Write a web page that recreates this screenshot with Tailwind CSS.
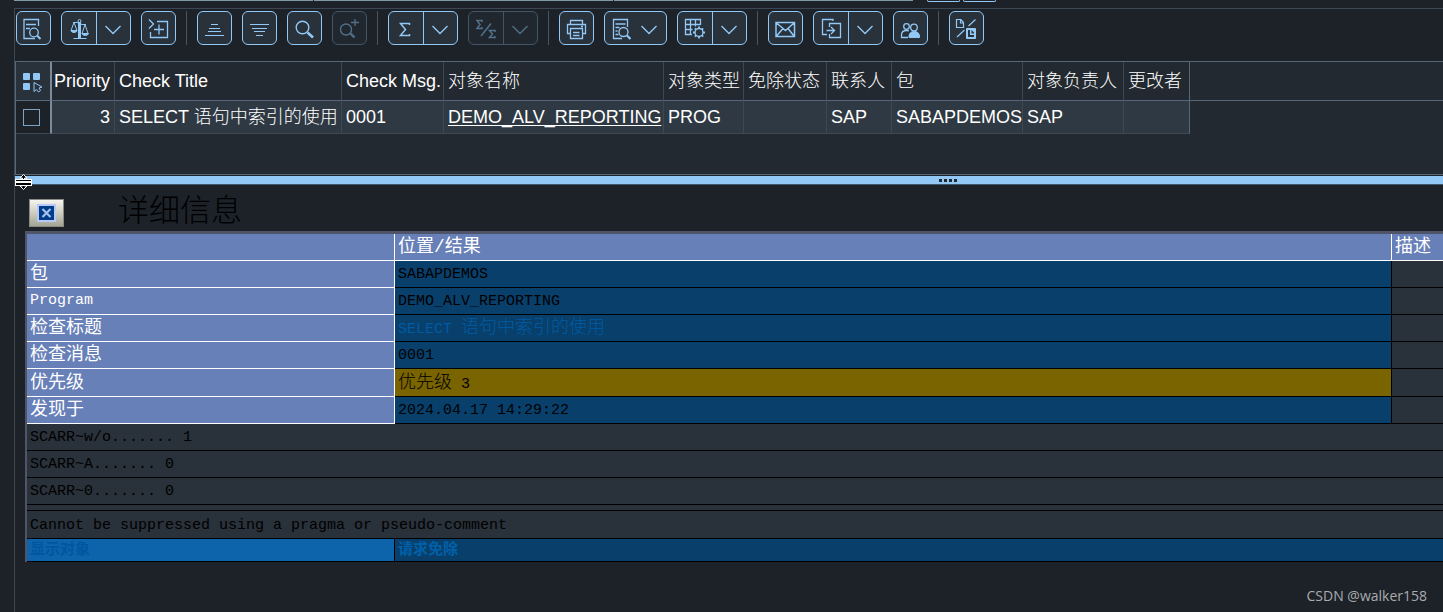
<!DOCTYPE html>
<html lang="zh-CN">
<head>
  <meta charset="UTF-8" />
  <title>Code Inspector</title>
  <script src="https://cdn.jsdelivr.net/npm/@tailwindcss/browser@4"></script>
</head>
<body class="bg-[#1d2229] min-h-screen flex flex-col pl-[14px] overflow-x-hidden text-white font-['Liberation_Sans','Noto_Sans_CJK_SC',sans-serif]">

  <!-- Shared icons -->
  <svg class="hidden">
    <symbol id="chevron" viewBox="0 0 25 24"><path d="M4.5 10 12 17.5 19.5 10" stroke-width="1.4" /></symbol>
  </svg>

  <!-- Bottom edge of the bar above -->
  <div class="h-2 flex items-start shrink-0">
    <div class="h-px w-[299px] mr-px bg-[#8297a8]"></div>
    <div class="h-px w-[299px] mr-px bg-[#8297a8]"></div>
    <div class="h-px w-[299px] mr-[14px] bg-[#8297a8]"></div>
    <div class="h-0.5 w-[33px] mr-[3px] rounded-b border border-t-0 border-[#91c8f6]"></div>
    <div class="h-0.5 w-[33px] rounded-b border border-t-0 border-[#91c8f6]"></div>
  </div>

  <main class="grow flex flex-col border-l border-[#3b4854]">

    <!-- Toolbar -->
    <div role="toolbar" class="flex items-center gap-[10px] border-t border-[#3b4854] pt-0.5 pb-4 pl-px text-[#91c8f6] [&_svg]:w-[25px] [&_svg]:h-6 [&_svg]:shrink-0 [&_svg]:fill-none [&_svg]:stroke-current">
      <button aria-label="Details" class="w-[35px] h-[34px] shrink-0 flex items-center justify-center rounded-md border border-[#91c8f6] bg-[#29313a]">
        <svg viewBox="0 0 25 24"><path d="M17.5 10V3.5H3v19h11M5 8.5h10M5 12.5h4" stroke-width="1.3" /><circle cx="13" cy="16.5" r="4.3" stroke-width="1.3" /><path d="m16 19.5 3.5 3.5" stroke-width="2" /></svg>
      </button>

      <div class="flex shrink-0 h-[34px] w-[70px] rounded-md border border-[#91c8f6] bg-[#29313a] divide-x divide-[#91c8f6]">
        <button aria-label="Compare" class="w-[35px] flex items-center justify-center">
          <svg viewBox="0 0 25 24"><path d="M12.5 6v16" stroke-width="3" /><path d="M6.5 22.5h13M6 6.5h4l2.5 1 2.5 1h4M7 6.5l-3 8M7 6.5l3 8M18 8.5l-3 9M18 8.5l3 9" /><circle cx="12.5" cy="5" r="1.5" /><path class="fill-current" d="M4 14.5h6q-.5 2-3 2t-3-2zM15 17.5h6.500q-.5 2-3.200 2t-3.300-2z" /></svg>
        </button>
        <button aria-label="Compare menu" class="flex-1 flex items-center justify-center"><svg><use href="#chevron" /></svg></button>
      </div>

      <button aria-label="Insert" class="w-[35px] h-[34px] shrink-0 flex items-center justify-center rounded-md border border-[#91c8f6] bg-[#29313a]">
        <svg viewBox="0 0 25 24"><path d="M3 3.5 7.5 8 3 12.5M11 5.5h10.5v16h-17V16M8 13.5h10M13 8.5v10" stroke-width="1.3" /></svg>
      </button>
      <div class="w-px h-[34px] bg-[#475462]"></div>

      <button aria-label="Sort ascending" class="w-[35px] h-[34px] shrink-0 flex items-center justify-center rounded-md border border-[#91c8f6] bg-[#29313a]">
        <svg viewBox="0 0 25 24"><path d="M9 8.5h7M7 12.5h11M6 15.5h13M3 19.5h19" /></svg>
      </button>
      <button aria-label="Sort descending" class="w-[35px] h-[34px] shrink-0 flex items-center justify-center rounded-md border border-[#91c8f6] bg-[#29313a]">
        <svg viewBox="0 0 25 24"><path d="M3 8.5h19M5 12.5h15M7 15.5h11M9 19.5h7" /></svg>
      </button>
      <button aria-label="Find" class="w-[35px] h-[34px] shrink-0 flex items-center justify-center rounded-md border border-[#91c8f6] bg-[#29313a]">
        <svg viewBox="0 0 25 24"><circle cx="10.5" cy="11.5" r="6.3" stroke-width="1.4" /><path d="m15.5 16.5 5.5 5" stroke-width="2.6" /></svg>
      </button>
      <button disabled aria-label="Find next" class="w-[35px] h-[34px] shrink-0 flex items-center justify-center rounded-md border border-[#425668] bg-[#20272e] text-[#527089]">
        <svg viewBox="0 0 25 24"><circle cx="9" cy="13.5" r="5.5" stroke-width="1.4" /><path d="m13.5 17.5 4 4" stroke-width="2.4" /><path d="M14 6.5h8M18 3v7" stroke-width="1.3" /></svg>
      </button>
      <div class="w-px h-[34px] bg-[#475462]"></div>

      <div class="flex shrink-0 h-[34px] w-[70px] rounded-md border border-[#91c8f6] bg-[#29313a] divide-x divide-[#91c8f6]">
        <button aria-label="Total" class="w-[35px] flex items-center justify-center">
          <svg viewBox="0 0 25 24"><path d="M15.5 9V7.500h-9l5 6-5 6h9V18" stroke-width="1.5" /></svg>
        </button>
        <button aria-label="Total menu" class="flex-1 flex items-center justify-center"><svg><use href="#chevron" /></svg></button>
      </div>
      <div class="flex shrink-0 h-[34px] w-[70px] rounded-md border border-[#425668] bg-[#20272e] divide-x divide-[#425668] text-[#527089]">
        <button disabled aria-label="Subtotal" class="w-[35px] flex items-center justify-center">
          <svg viewBox="0 0 25 24"><path d="M8 6V4.500H3l3 4-3 4h5V11M7 20 17 7.500M21 16v-1.500h-5.500l3 3.500-3 3.500H21V20" stroke-width="1.5" /></svg>
        </button>
        <button disabled aria-label="Subtotal menu" class="flex-1 flex items-center justify-center"><svg><use href="#chevron" /></svg></button>
      </div>
      <div class="w-px h-[34px] bg-[#475462]"></div>

      <button aria-label="Print" class="w-[35px] h-[34px] shrink-0 flex items-center justify-center rounded-md border border-[#91c8f6] bg-[#29313a]">
        <svg viewBox="0 0 25 24"><path d="M6.5 8V4.500h12V8M6.500 17.500h-3v-9h18v9h-3M6.500 12.500h12v10h-12zM9 16.500h6.500M9 19.500h6.500M17 10.500h2" stroke-width="1.3" /></svg>
      </button>
      <button aria-label="Views" class="w-[63px] h-[34px] shrink-0 flex items-center gap-[3px] pl-1 rounded-md border border-[#91c8f6] bg-[#29313a]">
        <svg viewBox="0 0 25 24"><path d="M18.5 11V3.500h-14v19H13M6.500 8h10M6.500 11.500h4M6.500 15h2M6.500 18.500h3" stroke-width="1.3" /><circle cx="14.5" cy="16" r="4.5" stroke-width="1.3" /><path d="m18 19.5 3.5 3.5" stroke-width="2.2" /></svg>
        <svg><use href="#chevron" /></svg>
      </button>
      <div class="flex shrink-0 h-[34px] w-[70px] rounded-md border border-[#91c8f6] bg-[#29313a] divide-x divide-[#91c8f6]">
        <button aria-label="Layout" class="w-[35px] flex items-center justify-center">
          <svg viewBox="0 0 25 24"><path d="M17.5 9V3.500h-15v15H9M2.500 8.500h15M2.500 13.500h7M7.500 3.500v15M12.500 3.500v7" stroke-width="1.3" /><circle cx="16" cy="16.5" r="4" stroke-width="1.4" /><path d="M16 10.5v2M16 20.5v2M10 16.5h2M20 16.5h2M11.800 12.300l1.400 1.400M18.800 19.300l1.400 1.400M20.200 12.300l-1.400 1.400M13.200 19.300l-1.400 1.400" stroke-width="1.8" /></svg>
        </button>
        <button aria-label="Layout menu" class="flex-1 flex items-center justify-center"><svg><use href="#chevron" /></svg></button>
      </div>
      <div class="w-px h-[34px] bg-[#475462]"></div>

      <button aria-label="Mail" class="w-[35px] h-[34px] shrink-0 flex items-center justify-center rounded-md border border-[#91c8f6] bg-[#29313a]">
        <svg viewBox="0 0 25 24"><path d="M3 6.500h18.500v14H3zM3.500 7l9 7.500 8.500-7.500M3.500 20l6.500-7.500M21 20l-6-7.500" stroke-width="1.5" /></svg>
      </button>
      <div class="flex shrink-0 h-[34px] w-[70px] rounded-md border border-[#91c8f6] bg-[#29313a] divide-x divide-[#91c8f6]">
        <button aria-label="Export" class="w-[35px] flex items-center justify-center">
          <svg viewBox="0 0 25 24"><path d="M14 5V3.500H3.500v15H8M10.500 11V7.500h11v14h-11V18M7.500 14.500h8M12 11l3.500 3.500L12 18" stroke-width="1.3" /></svg>
        </button>
        <button aria-label="Export menu" class="flex-1 flex items-center justify-center"><svg><use href="#chevron" /></svg></button>
      </div>
      <button aria-label="Responsible" class="w-[35px] h-[34px] shrink-0 flex items-center justify-center rounded-md border border-[#91c8f6] bg-[#29313a]">
        <svg viewBox="0 0 25 24"><circle cx="8.5" cy="10.5" r="2.8" stroke-width="1.3" /><path d="M10 21.5H3.500V19q0-4.500 5-4.500 1.500 0 2.500.5" stroke-width="1.3" /><circle cx="16" cy="11.5" r="3.3" stroke-width="1.3" /><path class="fill-current" d="M11 21.5V20q.5-4.500 5.200-4.500t5.300 4.500v1.500z" /></svg>
      </button>
      <div class="w-px h-[34px] bg-[#475462]"></div>

      <button aria-label="Exemption" class="w-[35px] h-[34px] shrink-0 flex items-center justify-center rounded-md border border-[#91c8f6] bg-[#29313a]">
        <svg viewBox="0 0 25 24"><path d="M2.500 3.500H7l2.500 3v5h-7zM6.500 3.500V7h3M21.500 3.500l-7 6.500M10.500 14l-7.500 7" stroke-width="1.2" /><path class="fill-current" d="M12.500 12.500h9v10h-9z" /><path class="fill-[#29313a] stroke-none" d="M14 14h2v5h4v2h-6zM17.500 14l2.500 2.500v1h-2.500z" /></svg>
      </button>
    </div>

    <!-- Result grid -->
    <div class="border-y border-l border-[#56677a] bg-[#232930] pb-10 overflow-hidden">
      <table class="w-full table-fixed border-separate border-spacing-0 text-lg leading-6 font-light whitespace-nowrap text-left">
        <colgroup>
          <col class="w-[36px]" /><col class="w-[63px]" /><col class="w-[227px]" /><col class="w-[102px]" /><col class="w-[220px]" /><col class="w-[80px]" /><col class="w-[83px]" /><col class="w-[65px]" /><col class="w-[131px]" /><col class="w-[101px]" /><col class="w-[66px]" /><col />
        </colgroup>
        <thead>
          <tr class="h-[39px] [&>th]:font-light [&>th]:p-0 [&>th]:border-b [&>th]:border-b-[#56677a]">
            <th class="border-r-2 border-r-[#7c8a9c] bg-[#29313a] rounded-tl">
              <button aria-label="Select all" class="block mx-auto pt-1">
                <svg viewBox="0 0 22 20" class="w-[22px] h-5 fill-[#91c8f6]"><rect x="1" width="7" height="7" rx="1" /><rect x="11" width="7" height="7" rx="1" /><rect x="1" y="10" width="7" height="7" rx="1" /><path class="fill-none stroke-[#91c8f6]" d="M12 9.5v9l2.500-2 2 2.500 2-1.500-1.500-2.500 3-1z" /></svg>
              </button>
            </th>
            <th class="border-r border-r-[#3d4853]"><span class="pl-0.5">Priority</span></th>
            <th class="border-r border-r-[#3d4853]"><span class="pl-1">Check Title</span></th>
            <th class="border-r border-r-[#3d4853]"><span class="pl-1">Check Msg.</span></th>
            <th class="border-r border-r-[#3d4853]"><span class="pl-1">对象名称</span></th>
            <th class="border-r border-r-[#3d4853]"><span class="pl-1">对象类型</span></th>
            <th class="border-r border-r-[#3d4853]"><span class="pl-1">免除状态</span></th>
            <th class="border-r border-r-[#3d4853]"><span class="pl-1">联系人</span></th>
            <th class="border-r border-r-[#3d4853]"><span class="pl-1">包</span></th>
            <th class="border-r border-r-[#3d4853]"><span class="pl-1">对象负责人</span></th>
            <th class="border-r border-r-[#56677a]"><span class="pl-1">更改者</span></th>
            <th></th>
          </tr>
        </thead>
        <tbody>
          <tr class="h-[33px] [&>td]:p-0">
            <td class="border-r-2 border-r-[#7c8a9c] border-b border-b-[#3d4853] bg-[#1d2229]">
              <input type="checkbox" aria-label="Select row" class="block appearance-none w-[17px] h-[17px] ml-[7px] border border-[#7fa3c4]" />
            </td>
            <td class="border-r border-b border-[#3d4853] bg-[#2f3943] text-right"><span class="pr-1">3</span></td>
            <td class="border-r border-b border-[#3d4853] bg-[#2f3943]"><span class="pl-1">SELECT 语句中索引的使用</span></td>
            <td class="border-r border-b border-[#3d4853] bg-[#2f3943]"><span class="pl-1">0001</span></td>
            <td class="border-r border-b border-[#3d4853] bg-[#2f3943]"><a href="#" class="ml-1 underline underline-offset-2">DEMO_ALV_REPORTING</a></td>
            <td class="border-r border-b border-[#3d4853] bg-[#2f3943]"><span class="pl-1">PROG</span></td>
            <td class="border-r border-b border-[#3d4853] bg-[#2f3943]"></td>
            <td class="border-r border-b border-[#3d4853] bg-[#2f3943]"><span class="pl-1">SAP</span></td>
            <td class="border-r border-b border-[#3d4853] bg-[#2f3943]"><span class="pl-1">SABAPDEMOS</span></td>
            <td class="border-r border-b border-[#3d4853] bg-[#2f3943]"><span class="pl-1">SAP</span></td>
            <td class="border-r border-b border-r-[#56677a] border-b-[#3d4853] bg-[#2f3943]"></td>
            <td></td>
          </tr>
        </tbody>
      </table>
    </div>

    <!-- Splitter -->
    <div class="relative mt-px h-[9px] shrink-0 bg-[#91c8f6] border-b border-[#3f566b] flex items-center gap-0.5 pl-[924px]">
      <div class="w-[3px] h-[3px] bg-[#232930]"></div>
      <div class="w-[3px] h-[3px] bg-[#232930]"></div>
      <div class="w-[3px] h-[3px] bg-[#232930]"></div>
      <div class="w-[3px] h-[3px] bg-[#232930]"></div>
      <svg viewBox="0 0 17 16" class="absolute left-0 -top-0.5 w-[17px] h-4">
        <path class="fill-black stroke-white" d="M8.500.5 12 4H9.500v8H12l-3.500 3.500L5 12h2.500V4H5z" />
        <path class="fill-white" d="M0 5h17v7H0z" />
        <path class="fill-black" d="M1 6h15v1H1zM1 9h15v2H1z" />
      </svg>
    </div>

    <!-- Detail header -->
    <div class="h-[46px] shrink-0 flex items-center pl-[14px] pt-1.5">
      <button aria-label="Close" class="w-[35px] h-7 mr-[54px] mt-1 flex items-center justify-center border border-[#8a8a84] bg-linear-to-b from-[#f5f5ee] to-[#a5a595]">
        <svg viewBox="0 0 19 18" class="w-[19px] h-[18px]"><path class="fill-[#003c88] stroke-[#b9c8fb]" d="M1 1h17v16H1z" stroke-width="2" /><path class="stroke-[#a5c0ee]" d="m5.5 5 8 8M13.5 5l-8 8" stroke-width="2.2" /></svg>
      </button>
      <h2 class="text-black text-[31px] leading-9 font-light">详细信息</h2>
    </div>

    <!-- Detail table -->
    <div class="pl-[10px]">
      <table class="w-full table-fixed border-separate border-spacing-0 border-t-[3px] border-l-2 border-[#505469] text-left whitespace-nowrap text-black font-light font-['Liberation_Mono','Noto_Sans_CJK_SC',monospace] text-[15px] leading-5 [&_th]:font-normal [&_th]:text-white [&_th]:bg-[#6880b8] [&_th]:border-b [&_th]:border-white [&_th]:py-0 [&_th]:px-[3px] [&_td]:pt-0.5 [&_td]:pb-0 [&_td]:px-[3px] [&_td]:border-b [&_td]:border-black">
        <colgroup>
          <col class="w-[368px]" /><col /><col class="w-[51px]" />
        </colgroup>
        <thead>
          <tr class="h-[27px]">
            <th class="border-r"></th>
            <th class="border-r text-lg leading-5">位置/结果</th>
            <th class="text-lg leading-5">描述</th>
          </tr>
        </thead>
        <tbody>
          <tr class="h-[27px]">
            <th class="border-r text-lg leading-5">包</th>
            <td class="border-r bg-[#083f6b]">SABAPDEMOS</td>
            <td class="bg-[#29313a]"></td>
          </tr>
          <tr class="h-[27px]">
            <th class="border-r">Program</th>
            <td class="border-r bg-[#083f6b]">DEMO_ALV_REPORTING</td>
            <td class="bg-[#29313a]"></td>
          </tr>
          <tr class="h-[27px]">
            <th class="border-r text-lg leading-5">检查标题</th>
            <td class="border-r bg-[#083f6b]"><a href="#" class="text-[#005ba3]">SELECT <span class="text-lg leading-5">语句中索引的使用</span></a></td>
            <td class="bg-[#29313a]"></td>
          </tr>
          <tr class="h-[27px]">
            <th class="border-r text-lg leading-5">检查消息</th>
            <td class="border-r bg-[#083f6b]">0001</td>
            <td class="bg-[#29313a]"></td>
          </tr>
          <tr class="h-7">
            <th class="border-r text-lg leading-5">优先级</th>
            <td class="border-r bg-[#7a6400]"><span class="text-lg leading-5">优先级</span> 3</td>
            <td class="bg-[#29313a]"></td>
          </tr>
          <tr class="h-[27px]">
            <th class="border-r text-lg leading-5">发现于</th>
            <td class="border-r bg-[#083f6b]">2024.04.17 14:29:22</td>
            <td class="bg-[#29313a]"></td>
          </tr>
          <tr class="h-[27px]"><td colspan="3" class="bg-[#29313a]">SCARR~w/o....... 1</td></tr>
          <tr class="h-[27px]"><td colspan="3" class="bg-[#29313a]">SCARR~A....... 0</td></tr>
          <tr class="h-[27px]"><td colspan="3" class="bg-[#29313a]">SCARR~0....... 0</td></tr>
          <tr class="h-1.5"><td colspan="3" class="bg-[#29313a]"></td></tr>
          <tr class="h-7"><td colspan="3" class="bg-[#29313a]">Cannot be suppressed using a pragma or pseudo-comment</td></tr>
          <tr class="h-[23px] font-bold">
            <td class="border-r bg-[#0d64ab]"><a href="#" class="text-[#0057a0]">显示对象</a></td>
            <td colspan="2" class="bg-[#083f6b]"><a href="#" class="text-[#0061aa]">请求免除</a></td>
          </tr>
        </tbody>
      </table>
    </div>

    <footer class="mt-auto pb-1.5 pr-4 text-right text-sm leading-5 text-[#a9abae] font-['Open_Sans',sans-serif]">CSDN @walker158</footer>
  </main>

</body>
</html>
